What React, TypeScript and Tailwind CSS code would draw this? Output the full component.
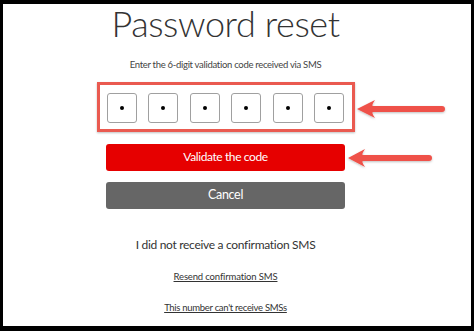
import React from "react";

function Arrow({ x1, x2, y, head }: { x1: number; x2: number; y: number; head: number }) {
  const w = x2 - x1 + 6;
  return (
    <svg
      className="absolute"
      style={{ left: x1 - 2, top: y - 12 }}
      width={w}
      height={26}
      viewBox={`0 0 ${w} 26`}
    >
      <defs>
        <filter id={`sh${y}`} x="-10%" y="-50%" width="120%" height="200%">
          <feDropShadow dx="0" dy="1" stdDeviation="0.8" floodColor="#000" floodOpacity="0.25" />
        </filter>
      </defs>
      <g filter={`url(#sh${y})`}>
        <path
          d={`M2 12 L${2 + head} 3 Q${head - 2} 9 ${head} 9 L${w - 5} 9 Q${w - 2} 9 ${w - 2} 12 Q${w - 2} 15 ${w - 5} 15 L${head} 15 Q${head - 2} 15 ${2 + head} 21 Z`}
          fill="#ef5148"
        />
      </g>
    </svg>
  );
}

export default function App() {
  return (
    <div
      className="relative w-[474px] h-[331px] bg-white border-black border-t-[4px] border-l-[3px] border-r-[3px] border-b-[5px] overflow-hidden"
      style={{ fontFamily: "Lato, 'Liberation Sans', sans-serif" }}
    >
      <div className="w-[239px] ml-[103px] flex flex-col items-center">
        <h1 className="mt-[1px] text-[36px] leading-none font-light text-[#333] tracking-[-0.4px] whitespace-nowrap">
          Password reset
        </h1>
        <p className="mt-[19px] text-[9.5px] leading-none text-[#444] tracking-[-0.3px] whitespace-nowrap">
          Enter the 6-digit validation code received via SMS
        </p>
        <div className="mt-[12px] w-[258px] h-[50px] border-[3px] border-[#ea5a50] shadow-[0_1px_2px_rgba(0,0,0,0.25)] flex items-start justify-center pt-[8px]">
          <div className="flex gap-[11.6px]">
            {[0, 1, 2, 3, 4, 5].map((i) => (
              <div
                key={i}
                className="w-[30px] h-[30px] border border-[#a0a0a0] rounded-[3px] bg-white flex items-center justify-center"
              >
                <div className="w-[4px] h-[4px] rounded-full bg-black" />
              </div>
            ))}
          </div>
        </div>
        <button className="mt-[12px] w-[239px] h-[27px] rounded-[3px] bg-[#e60000] text-white text-[12px] tracking-[-0.4px] leading-none">
          Validate the code
        </button>
        <button className="mt-[11px] w-[239px] h-[27px] rounded-[3px] bg-[#666666] text-white text-[12.5px] tracking-[-0.3px] leading-none">
          Cancel
        </button>
        <p className="mt-[30px] text-[12px] leading-none text-[#333] tracking-[-0.3px] whitespace-nowrap">
          I did not receive a confirmation SMS
        </p>
        <a className="mt-[21px] text-[9.5px] leading-none text-[#333] underline tracking-[-0.15px] whitespace-nowrap">
          Resend confirmation SMS
        </a>
        <a className="mt-[22px] text-[9.5px] leading-none text-[#333] underline tracking-[-0.3px] whitespace-nowrap">
          This number can't receive SMSs
        </a>
      </div>
      <div className="absolute left-[-3px] top-[-4px]">
        <Arrow x1={357} x2={443} y={109} head={18} />
        <Arrow x1={348} x2={430} y={158} head={17} />
      </div>
    </div>
  );
}
